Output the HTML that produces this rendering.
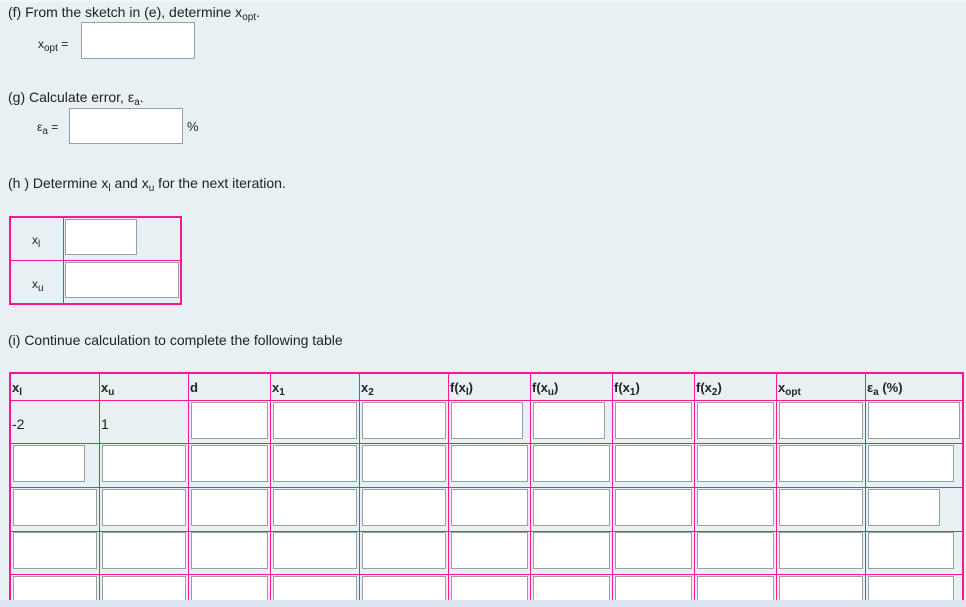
<!DOCTYPE html>
<html style="overflow:hidden;height:607px"><head><meta charset="utf-8"><style>
body{margin:0;width:966px;height:607px;overflow:hidden;background:#e7f1f4;font-family:"Liberation Sans",sans-serif;font-size:14px;color:#222;position:relative}
.a{position:absolute;white-space:nowrap;line-height:16px}
.in,.r div{position:absolute;background:#fff;border:1px solid #9a9ea3;box-sizing:border-box}
sub{font-size:10px;vertical-align:-3px;line-height:0}
.r{position:absolute;left:0;width:966px;height:37px}
.r div{top:0;height:37px}
.c1{left:13px;width:84px}.c2{left:102px;width:84px}.c3{left:191px;width:77px}.c4{left:273px;width:84px}.c5{left:362px;width:84px}.c6{left:451px;width:77px}.c7{left:533px;width:77px}.c8{left:615px;width:77px}.c9{left:697px;width:77px}.c10{left:779px;width:84px}.c11{left:868px;width:92px}
.v{position:absolute;top:373px;width:1px;height:227px;background:#ff1493}
.h{position:absolute;left:10px;width:952px;height:1px;background:#ff1493}
.th{position:absolute;top:380px;font-weight:bold;font-size:13px;white-space:nowrap}
</style></head><body>
<div class="a" style="left:8px;top:4px">(f) From the sketch in (e), determine x<sub>opt</sub>.</div>
<div class="a" style="left:38px;top:36px;font-size:12px">x<sub>opt</sub> =</div>
<div class="in" style="left:81px;top:22px;width:114px;height:37px"></div>
<div class="a" style="left:8px;top:89px">(g) Calculate error, ε<sub>a</sub>.</div>
<div class="a" style="left:37px;top:119px;font-size:12px">ε<sub>a</sub> =</div>
<div class="in" style="left:69px;top:108px;width:114px;height:36px"></div>
<div class="a" style="left:187px;top:119px;font-size:13px">%</div>
<div class="a" style="left:8px;top:175px">(h ) Determine x<sub>l</sub> and x<sub>u</sub> for the next iteration.</div>
<div style="position:absolute;left:9px;top:216px;width:173px;height:89px;border:2px solid #ff1493;box-sizing:border-box"></div>
<div style="position:absolute;left:63px;top:216px;width:1px;height:89px;background:#ff1493"></div>
<div style="position:absolute;left:9px;top:260px;width:173px;height:1px;background:#ff1493"></div>
<div class="a" style="left:32px;top:232px;font-size:12px">x<sub>l</sub></div>
<div class="a" style="left:32px;top:276px;font-size:12px">x<sub>u</sub></div>
<div class="in" style="left:65px;top:219px;width:72px;height:36px"></div>
<div class="in" style="left:65px;top:262px;width:114px;height:36px"></div>
<div class="a" style="left:8px;top:332px">(i) Continue calculation to complete the following table</div>

<div style="position:absolute;left:9px;top:372px;width:955px;height:228px;border:2px solid #ff1493;border-bottom:none;box-sizing:border-box"></div>
<div class="v" style="left:99px"></div><div class="v" style="left:188px"></div><div class="v" style="left:270px"></div><div class="v" style="left:359px"></div><div class="v" style="left:448px"></div><div class="v" style="left:530px"></div><div class="v" style="left:612px"></div><div class="v" style="left:694px"></div><div class="v" style="left:776px"></div><div class="v" style="left:865px"></div>
<div class="h" style="top:400px"></div><div class="h" style="top:443px"></div><div class="h" style="top:487px"></div><div class="h" style="top:531px"></div><div class="h" style="top:574px"></div>

<div class="th" style="left:12px">x<sub>l</sub></div>
<div class="th" style="left:101px">x<sub>u</sub></div>
<div class="th" style="left:190px">d</div>
<div class="th" style="left:272px">x<sub>1</sub></div>
<div class="th" style="left:361px">x<sub>2</sub></div>
<div class="th" style="left:450px">f(x<sub>l</sub>)</div>
<div class="th" style="left:532px">f(x<sub>u</sub>)</div>
<div class="th" style="left:614px">f(x<sub>1</sub>)</div>
<div class="th" style="left:696px">f(x<sub>2</sub>)</div>
<div class="th" style="left:778px">x<sub>opt</sub></div>
<div class="th" style="left:867px">ε<sub>a</sub> (%)</div>

<div class="a" style="left:12px;top:416px">-2</div>
<div class="a" style="left:101px;top:416px">1</div>
<div class="r" style="top:402px"><div class="c3"></div><div class="c4"></div><div class="c5"></div><div class="c6" style="width:72px"></div><div class="c7" style="width:72px"></div><div class="c8"></div><div class="c9"></div><div class="c10"></div><div class="c11"></div></div>
<div class="r" style="top:445px"><div class="c1" style="width:72px"></div><div class="c2"></div><div class="c3"></div><div class="c4"></div><div class="c5"></div><div class="c6"></div><div class="c7"></div><div class="c8"></div><div class="c9"></div><div class="c10"></div><div class="c11" style="width:86px"></div></div>
<div class="r" style="top:489px"><div class="c1"></div><div class="c2"></div><div class="c3"></div><div class="c4"></div><div class="c5"></div><div class="c6"></div><div class="c7"></div><div class="c8"></div><div class="c9"></div><div class="c10"></div><div class="c11" style="width:72px"></div></div>
<div class="r" style="top:532px"><div class="c1"></div><div class="c2"></div><div class="c3"></div><div class="c4"></div><div class="c5"></div><div class="c6"></div><div class="c7"></div><div class="c8"></div><div class="c9"></div><div class="c10"></div><div class="c11" style="width:86px"></div></div>
<div class="r" style="top:576px;height:24px;overflow:hidden"><div class="c1"></div><div class="c2"></div><div class="c3"></div><div class="c4"></div><div class="c5"></div><div class="c6"></div><div class="c7"></div><div class="c8"></div><div class="c9"></div><div class="c10"></div><div class="c11" style="width:86px"></div></div>

<div style="position:absolute;left:0;top:600px;width:966px;height:7px;background:#dce5f2;z-index:5"></div>
<div style="position:absolute;left:0;top:0;width:966px;height:2px;background:#f3f6f8"></div>
</body></html>
